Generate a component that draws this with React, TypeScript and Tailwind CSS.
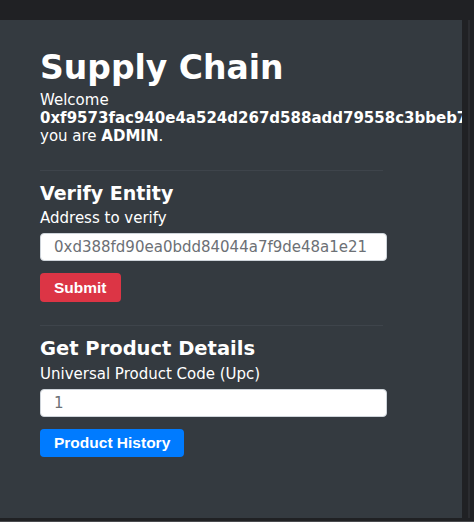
import React from "react";

const account = "0xf9573fac940e4a524d267d588add79558c3bbeb7";

const Divider = ({ className = "" }: { className?: string }) => (
  <div className={`h-px w-[343px] bg-[#3e444b] ${className}`} />
);

const Field = ({ value }: { value: string }) => (
  <input
    readOnly
    value={value}
    className="mt-[6px] block h-[28px] w-[347px] rounded-[4px] border border-[#ced4da] bg-white px-[13px] text-[15px] text-[#6c7075] outline-none"
  />
);

const App = () => {
  return (
    <div className="flex h-[522px] w-[474px] flex-col overflow-hidden bg-[#202124] font-['DejaVu_Sans',sans-serif]">
      <div className="h-5 shrink-0" />
      <div className="flex min-h-0 flex-1">
        <main className="w-[462px] shrink-0 overflow-hidden bg-[#343a40] pl-10 pt-[29px] text-white">
          <h1 className="text-[33px] font-bold leading-[38px]">Supply Chain</h1>
          <div className="mt-1 whitespace-nowrap text-[15px] leading-[18px]">
            <p>Welcome</p>
            <p className="font-bold">{account}</p>
            <p>
              you are <span className="font-bold">ADMIN</span>.
            </p>
          </div>

          <Divider className="mt-[25px]" />

          <section aria-labelledby="verify-entity">
            <h2
              id="verify-entity"
              className="mt-[11px] text-[19px] font-bold leading-[22px]"
            >
              Verify Entity
            </h2>
            <label className="mt-[5px] block text-[15px] leading-[18px]">
              Address to verify
            </label>
            <Field value="0xd388fd90ea0bdd84044a7f9de48a1e21" />
            <button className="mt-3 flex h-[29px] items-center rounded-[4px] bg-[#dc3545] px-[14px] font-['Liberation_Sans',sans-serif] text-[15.5px] font-bold text-white">
              Submit
            </button>
          </section>

          <Divider className="mt-[23px]" />

          <section aria-labelledby="product-details">
            <h2
              id="product-details"
              className="mt-3 text-[19.5px] font-bold leading-[22px]"
            >
              Get Product Details
            </h2>
            <label className="mt-[5px] block text-[15px] leading-[18px]">
              Universal Product Code (Upc)
            </label>
            <Field value="1" />
            <button className="mt-3 flex h-[28px] items-center rounded-[4px] bg-[#007bff] px-[14px] font-['Liberation_Sans',sans-serif] text-[15.5px] font-bold text-white">
              Product History
            </button>
          </section>
        </main>
        <div className="flex flex-1 justify-end pr-1">
          <div className="w-[2px] bg-[#2b2c30]" />
        </div>
      </div>
      <div className="h-1 shrink-0 border-b border-[#4a4b4f]" />
    </div>
  );
};

export default App;
